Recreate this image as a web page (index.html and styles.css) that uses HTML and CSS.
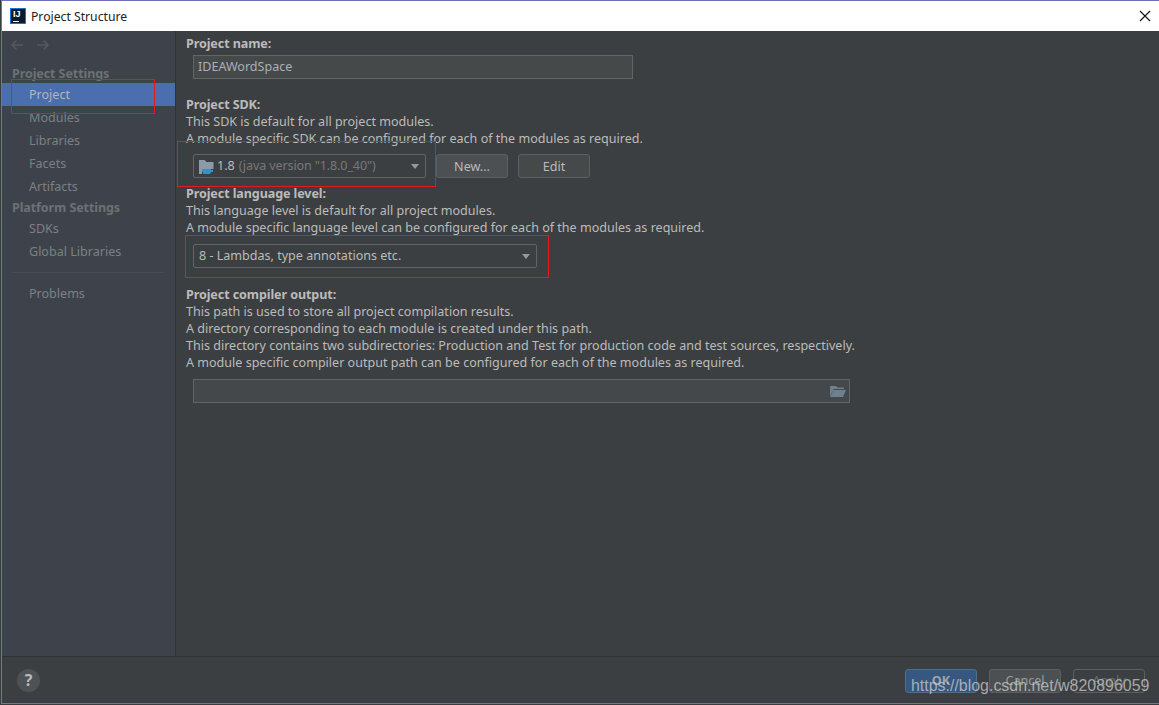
FILE: index.html
```html
<!DOCTYPE html>
<html lang="en">
<head>
<meta charset="utf-8">
<title>Project Structure</title>
<link rel="stylesheet" href="styles.css">
</head>
<body>
<div class="window">
  <header class="titlebar">
    <div class="logo"><span class="logo-text">IJ</span><span class="logo-bar"></span></div>
    <span class="title">Project Structure</span>
    <svg class="close" width="12" height="12" viewBox="0 0 12 12"><path d="M1 1L11 11M11 1L1 11" stroke="#111" stroke-width="1.1" fill="none"/></svg>
  </header>
  <div class="body">
    <nav class="sidebar">
      <div class="arrows">
        <svg width="14" height="12" viewBox="0 0 14 12"><path d="M13 6H2M6.500 1.500L2 6l4.500 4.500" stroke="#55595c" stroke-width="1.500" fill="none"/></svg>
        <svg width="14" height="12" viewBox="0 0 14 12"><path d="M1 6h11M7.500 1.500L12 6l-4.500 4.500" stroke="#55595c" stroke-width="1.500" fill="none"/></svg>
      </div>
      <div class="nav-head nav-head-first">Project Settings</div>
      <div class="nav-item selected">Project</div>
      <div class="nav-item">Modules</div>
      <div class="nav-item">Libraries</div>
      <div class="nav-item">Facets</div>
      <div class="nav-item">Artifacts</div>
      <div class="nav-head">Platform Settings</div>
      <div class="nav-item">SDKs</div>
      <div class="nav-item">Global Libraries</div>
      <div class="nav-sep"></div>
      <div class="nav-item">Problems</div>
    </nav>
    <main class="content">
      <section class="sec-name">
        <div class="label">Project name:</div>
        <div class="field name-field">IDEAWordSpace</div>
      </section>
      <section class="sec-sdk">
        <div class="label">Project SDK:</div>
        <div class="line">This SDK is default for all project modules.</div>
        <div class="line">A module specific SDK can be configured for each of the modules as required.</div>
        <div class="sdk-row">
          <div class="combo sdk-combo">
            <svg class="folder" width="16" height="16" viewBox="0 0 16 16"><path d="M0 2h5.500l2 2H14.500v7H3v5H0z" fill="#8b9aa8"/><path d="M3 11h9v1h2v2h-2l-1 2H4.500L3 13z" fill="#3592c4"/></svg>
            <span class="sdk-ver">1.8</span><span class="sdk-desc">(java version "1.8.0_40")</span>
            <span class="caret"></span>
          </div>
          <div class="btn btn-new">New...</div>
          <div class="btn btn-edit">Edit</div>
        </div>
      </section>
      <section class="sec-lang">
        <div class="label">Project language level:</div>
        <div class="line">This language level is default for all project modules.</div>
        <div class="line">A module specific language level can be configured for each of the modules as required.</div>
        <div class="combo lang-combo">8 - Lambdas, type annotations etc.<span class="caret"></span></div>
      </section>
      <section class="sec-output">
        <div class="label">Project compiler output:</div>
        <div class="line">This path is used to store all project compilation results.</div>
        <div class="line">A directory corresponding to each module is created under this path.</div>
        <div class="line">This directory contains two subdirectories: Production and Test for production code and test sources, respectively.</div>
        <div class="line">A module specific compiler output path can be configured for each of the modules as required.</div>
        <div class="field out-field">
          <svg width="16" height="13" viewBox="0 0 16 13"><path d="M0 1h6l1.500 1.500H14V4H4L0 11z M0 12l3.500-7H16l-3 7z" fill="#6e7f8d"/></svg>
        </div>
      </section>
    </main>
  </div>
  <footer class="footer">
    <div class="help">?</div>
    <div class="actions">
      <div class="dbtn ok">OK</div>
      <div class="dbtn cancel">Cancel</div>
      <div class="dbtn apply">Apply</div>
    </div>
  </footer>
</div>
<div class="mark mark-project"></div>
<div class="mark mark-sdk"></div>
<div class="mark mark-lang"></div>
<div class="watermark">https://blog.csdn.net/w820896059</div>
</body>
</html>
```
FILE: styles.css
```css
* { box-sizing: border-box; }
html, body { margin: 0; height: 100%; }
body {
  width: 1159px; height: 705px; overflow: hidden; position: relative;
  background: #3a3d40;
  font-family: "Noto Sans", sans-serif; font-size: 12.55px;
}
.window {
  margin-left: 1px; height: 704px; display: flex; flex-direction: column;
  border-top: 1px solid #6d6fc0; border-left: 1px solid #6d6fc0; border-bottom: 1px solid #6d6fc0;
  background: #3c3f41;
}
.titlebar {
  height: 30px; flex: none; background: #fff; display: flex; align-items: center;
  padding-left: 8px; color: #222; font-size: 12.2px;
}
.logo { width: 16px; height: 16px; background: #0b1a2a; position: relative; border: 1px solid #1976c8; margin-right: 5px; }
.logo-text { display: block; color: #fff; font: bold 9px/10px "Liberation Sans", sans-serif; padding-left: 2px; }
.logo-bar { position: absolute; left: 2px; bottom: 1px; width: 6px; height: 1px; background: #fff; }
.title { flex: 1; }
.close { margin-right: 8px; }
.body { flex: 1; display: flex; min-height: 0; }
.sidebar { width: 174px; flex: none; background: #3e434b; border-right: 1px solid #323232; display: flex; flex-direction: column; color: #7b8085; }
.arrows { height: 26px; padding: 8px 0 0 8px; display: flex; gap: 12px; }
.nav-head { height: 19px; line-height: 20px; padding-left: 10px; font-weight: 700; color: #6c7175; letter-spacing: -0.1px; }
.nav-head-first { margin-top: 6px; height: 20px; line-height: 21px; }
.nav-item { height: 23px; line-height: 23px; padding-left: 27px; }
.selected { background: #4b6eaf; color: #b0b6bd; }
.nav-sep { height: 1px; background: #494d52; margin: 9px 0 9px 10px; width: 152px; }
.content { flex: 1; padding: 4px 0 0 10px; color: #bbbbbb; }
.label { font-weight: 700; line-height: 17px; height: 17px; letter-spacing: -0.09px; }
.line { line-height: 17px; height: 17px; }
.field { background: #45494a; border: 1px solid #646464; }
.name-field { width: 440px; height: 24px; margin: 3px 0 0 7px; line-height: 22px; padding-left: 4px; color: #a9b0b5; }
.sec-sdk { margin-top: 17px; }
.sdk-row { display: flex; margin: 7px 0 0 7px; gap: 10px; align-items: center; }
.combo { position: relative; height: 24px; border: 1px solid #646464; border-radius: 2px; background: #3c3f41; line-height: 22px; padding-left: 5px; }
.sdk-combo { width: 233px; display: flex; align-items: center; }
.folder { margin-right: 2px; flex: none; }
.sdk-desc { color: #787878; margin-left: 4px; letter-spacing: -0.12px; }
.caret { position: absolute; right: 6px; top: 9px; border-left: 4px solid transparent; border-right: 4px solid transparent; border-top: 5px solid #999; }
.btn { width: 72px; height: 24px; text-align: center; line-height: 23px; border: 1px solid #5e6060; border-radius: 3px; }
.btn-new { background: #4c5052; }
.btn-edit { background: #45494a; }
.sec-lang { margin-top: 7px; }
.lang-combo { width: 344px; margin: 8px 0 0 7px; }
.sec-output { margin-top: 18px; }
.out-field { width: 657px; height: 24px; margin: 8px 0 0 7px; display: flex; justify-content: flex-end; align-items: center; padding-right: 3px; background: #44484a; }
.footer { flex: none; height: 47px; border-top: 1px solid #323232; display: flex; align-items: center; justify-content: space-between; padding: 0 14px 0 15px; }
.help { width: 23px; height: 23px; border-radius: 50%; background: #4e5254; color: #bbb; text-align: center; line-height: 23px; font-weight: 700; font-size: 16px; margin-top: 1px; }
.actions { display: flex; gap: 12px; margin-top: 2px; }
.dbtn { width: 72px; height: 24px; border-radius: 3px; text-align: center; line-height: 22px; border: 1px solid #5e6060; }
.ok { background: #365880; border-color: #4c708c; font-weight: 700; color: #a0a4a8; }
.cancel { background: #4c5052; color: #999c9e; }
.apply { color: #6a6d6f; background: #3c3f41; }
.mark { position: absolute; border: 1px solid #e31b1b; }
.mark-project { left: 11px; top: 79px; width: 144px; height: 35px; }
.mark-sdk { left: 177px; top: 141px; width: 259px; height: 46px; }
.mark-lang { left: 185px; top: 235px; width: 364px; height: 43px; }
.watermark { position: absolute; left: 911px; top: 677px; font: 15.95px/18px "Liberation Sans", sans-serif; color: rgba(205,205,205,.75); white-space: nowrap; }
```
